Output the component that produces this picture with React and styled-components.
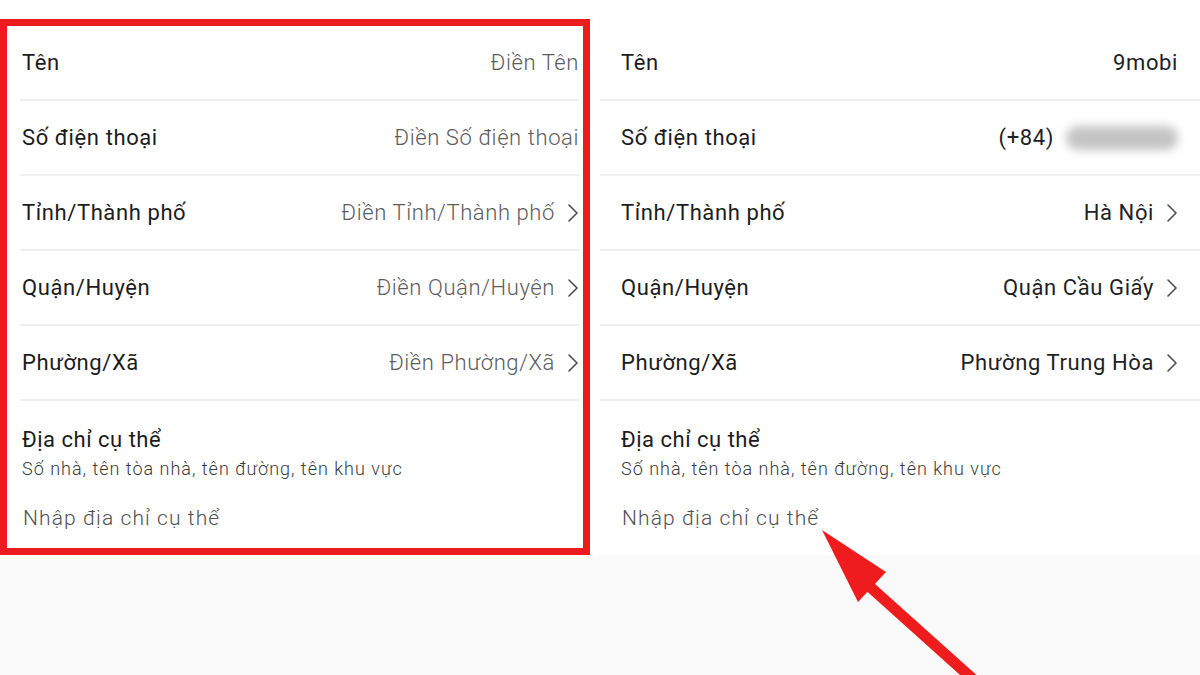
import styled, { createGlobalStyle } from "styled-components";

const GlobalStyle = createGlobalStyle`
  html, body {
    margin: 0;
    padding: 0;
    background: #fbfbfb;
  }
  body {
    font-family: Roboto, "Noto Sans", "Liberation Sans", sans-serif;
  }
`;

const Page = styled.div`
  position: relative;
  width: 1200px;
  height: 675px;
  overflow: hidden;
  background: linear-gradient(#ffffff 0, #ffffff 556px, #fafafa 556px);
  display: grid;
  grid-template-columns: 590px 600px;
  column-gap: 10px;
  align-items: start;
  padding-top: 19px;
  box-sizing: border-box;
`;

const Card = styled.div`
  background: #ffffff;
  box-sizing: border-box;
  border: ${(p) => (p.$highlight ? "7px solid #ec1b1f" : "none")};
  padding: ${(p) => (p.$highlight ? "0 4px 0 13px" : "7px 22px 0 21px")};
  height: 536px;
  box-shadow: ${(p) => (p.$highlight ? "none" : "0 1px 2px rgba(0,0,0,0.04)")};
`;

const Row = styled.div`
  height: 75px;
  display: flex;
  align-items: center;
  justify-content: space-between;
  border-bottom: 2px solid #efefef;
  box-sizing: border-box;
  margin: ${(p) => (p.$wide ? "0 -22px 0 -21px" : "0")};
  padding: ${(p) => (p.$wide ? "0 22px 0 21px" : "0 0 0 2px")};
`;

const Label = styled.span`
  font-size: 22px;
  color: #1c1c1c;
  letter-spacing: 0.6px;
`;

const Value = styled.span`
  display: flex;
  align-items: center;
  gap: 12px;
  font-size: 22px;
  letter-spacing: 0.6px;
  color: ${(p) => (p.$placeholder ? "#5c5c5c" : "#1f1f1f")};
  font-weight: ${(p) => (p.$placeholder ? 300 : 400)};
`;

const Blurred = styled.span`
  display: inline-block;
  width: 112px;
  height: 24px;
  border-radius: 12px;
  background: #c4c4c4;
  filter: blur(5px);
`;

const AddressBlock = styled.div`
  padding: ${(p) => (p.$inset ? "26px 0 0 2px" : "26px 0 0 0")};
  display: flex;
  flex-direction: column;
`;

const AddressTitle = styled.div`
  font-size: 22px;
  letter-spacing: 0.5px;
  color: #1c1c1c;
  line-height: 26px;
`;

const AddressHint = styled.div`
  font-size: 18px;
  letter-spacing: 1px;
  color: #3a3a3a;
  font-weight: 300;
  line-height: 24px;
  margin-top: 4px;
`;

const AddressInput = styled.div`
  font-size: 21px;
  letter-spacing: 1.1px;
  color: #4f4f4f;
  font-weight: 300;
  line-height: 26px;
  margin-top: 24px;
  padding-left: 1px;
`;

const Arrow = styled.svg`
  position: absolute;
  left: 0;
  top: 0;
  pointer-events: none;
`;

const Chevron = () => (
  <svg width="12" height="20" viewBox="0 0 12 20">
    <path d="M2 2 L10 10 L2 18" fill="none" stroke="#4a4a4a" strokeWidth="1.6" strokeLinecap="round" strokeLinejoin="round" />
  </svg>
);

const leftRows = [
  { label: "Tên", value: "Điền Tên" },
  { label: "Số điện thoại", value: "Điền Số điện thoại" },
  { label: "Tỉnh/Thành phố", value: "Điền Tỉnh/Thành phố", more: true },
  { label: "Quận/Huyện", value: "Điền Quận/Huyện", more: true },
  { label: "Phường/Xã", value: "Điền Phường/Xã", more: true },
];

const rightRows = [
  { label: "Tên", value: "9mobi" },
  { label: "Số điện thoại", value: "(+84)", phone: true },
  { label: "Tỉnh/Thành phố", value: "Hà Nội", more: true },
  { label: "Quận/Huyện", value: "Quận Cầu Giấy", more: true },
  { label: "Phường/Xã", value: "Phường Trung Hòa", more: true },
];

const Address = ({ inset }) => (
  <AddressBlock $inset={inset}>
    <AddressTitle>Địa chỉ cụ thể</AddressTitle>
    <AddressHint>Số nhà, tên tòa nhà, tên đường, tên khu vực</AddressHint>
    <AddressInput>Nhập địa chỉ cụ thể</AddressInput>
  </AddressBlock>
);

export default function App() {
  return (
    <>
      <GlobalStyle />
      <Page>
        <Card $highlight>
          {leftRows.map((r) => (
            <Row key={r.label}>
              <Label>{r.label}</Label>
              <Value $placeholder>
                {r.value}
                {r.more && <Chevron />}
              </Value>
            </Row>
          ))}
          <Address inset />
        </Card>
        <Card>
          {rightRows.map((r) => (
            <Row key={r.label} $wide>
              <Label>{r.label}</Label>
              <Value>
                {r.value}
                {r.phone && <Blurred />}
                {r.more && <Chevron />}
              </Value>
            </Row>
          ))}
          <Address />
        </Card>
        <Arrow width="1200" height="675" viewBox="0 0 1200 675">
          <line x1="868" y1="585" x2="985" y2="690" stroke="#ee1c1c" strokeWidth="11" />
          <polygon points="822,530 886,572 858,602" fill="#ee1c1c" />
        </Arrow>
      </Page>
    </>
  );
}
